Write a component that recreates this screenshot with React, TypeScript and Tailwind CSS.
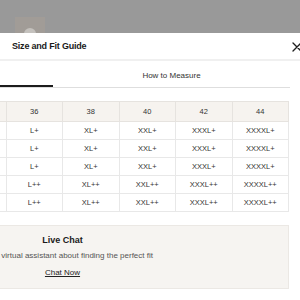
const sizes = ['32', '34', '36', '38', '40', '42', '44'];

const rows = [
  { label: 'Bust', cells: ['S+', 'M+', 'L+', 'XL+', 'XXL+', 'XXXL+', 'XXXXL+'] },
  { label: 'Waist', cells: ['S+', 'M+', 'L+', 'XL+', 'XXL+', 'XXXL+', 'XXXXL+'] },
  { label: 'Hip', cells: ['S+', 'M+', 'L+', 'XL+', 'XXL+', 'XXXL+', 'XXXXL+'] },
  { label: 'Length', cells: ['S++', 'M++', 'L++', 'XL++', 'XXL++', 'XXXL++', 'XXXXL++'] },
  { label: 'Sleeve', cells: ['S++', 'M++', 'L++', 'XL++', 'XXL++', 'XXXL++', 'XXXXL++'] },
];

function CloseIcon() {
  return (
    <svg width="10" height="10" viewBox="0 0 10 10" className="shrink-0 -mr-[2px]">
      <path d="M1 1L9 9M9 1L1 9" stroke="#1f1f1f" strokeWidth="1.3" strokeLinecap="round" />
    </svg>
  );
}

export default function App() {
  return (
    <div
      className="w-[300px] h-[300px] overflow-hidden flex flex-col bg-[#999999]"
      style={{ fontFamily: '"Liberation Sans", Arial, sans-serif' }}
    >
      {/* backdrop behind the dialog */}
      <div className="h-[33px] shrink-0 flex items-end pl-[15px]">
        <div className="w-[30px] h-[16px] bg-[#a19c97] overflow-hidden flex justify-center">
          <div className="w-[12px] h-[12px] rounded-full bg-[#c4c1bd] mt-[11px] shrink-0" />
        </div>
      </div>

      <div className="flex-1 bg-white flex flex-col">
        <div className="h-[28px] shrink-0 flex items-center justify-between pl-3 pt-[1px] border-b-2 border-[#f0f0f0]">
          <h1 className="text-[9px] font-bold tracking-[-0.2px] text-[#1a1a1a]">Size and Fit Guide</h1>
          <CloseIcon />
        </div>

        <div className="overflow-hidden">
          <div className="w-[474px] ml-[-184px]">
            <div className="flex border-b border-[#dedede]">
              <button className="flex-1 h-[26px] flex items-center justify-center pt-[4px] text-[8px] text-[#222] border-b-2 border-[#1c1c1c] -mb-px">
                Size Chart
              </button>
              <button className="flex-1 h-[26px] flex items-center justify-center pt-[4px] text-[8px] text-[#333]">
                How to Measure
              </button>
            </div>

            <div className="pl-[20px] pr-px">
              <table className="w-full table-fixed border-collapse mt-[13px] text-[7.5px] text-[#333]">
                <thead>
                  <tr className="h-[20px] bg-[#f6f3ef]">
                    <th className="border border-[#e6e3df] font-normal">Size</th>
                    {sizes.map((s) => (
                      <th key={s} className="border border-[#e6e3df] font-normal">
                        {s}
                      </th>
                    ))}
                  </tr>
                </thead>
                <tbody>
                  {rows.map((r) => (
                    <tr key={r.label} className="h-[18px]">
                      <td className="border border-[#e8e8e8] text-center">{r.label}</td>
                      {r.cells.map((c, i) => (
                        <td key={i} className="border border-[#e8e8e8] text-center">
                          {c}
                        </td>
                      ))}
                    </tr>
                  ))}
                </tbody>
              </table>

              <div className="mt-[13px] h-[64px] bg-[#f6f4f1] border border-[#ebe8e4] flex flex-col items-center pt-[9px]">
                <div className="text-[9px] font-bold leading-[11px] text-[#1a1a1a]">Live Chat</div>
                <div className="mt-[5px] text-[8px] leading-[10px] text-[#555]">
                  Ask our virtual assistant about finding the perfect fit
                </div>
                <a className="mt-[6px] text-[8px] leading-[12px] text-[#222] underline">Chat Now</a>
              </div>
            </div>
          </div>
        </div>
      </div>
    </div>
  );
}
